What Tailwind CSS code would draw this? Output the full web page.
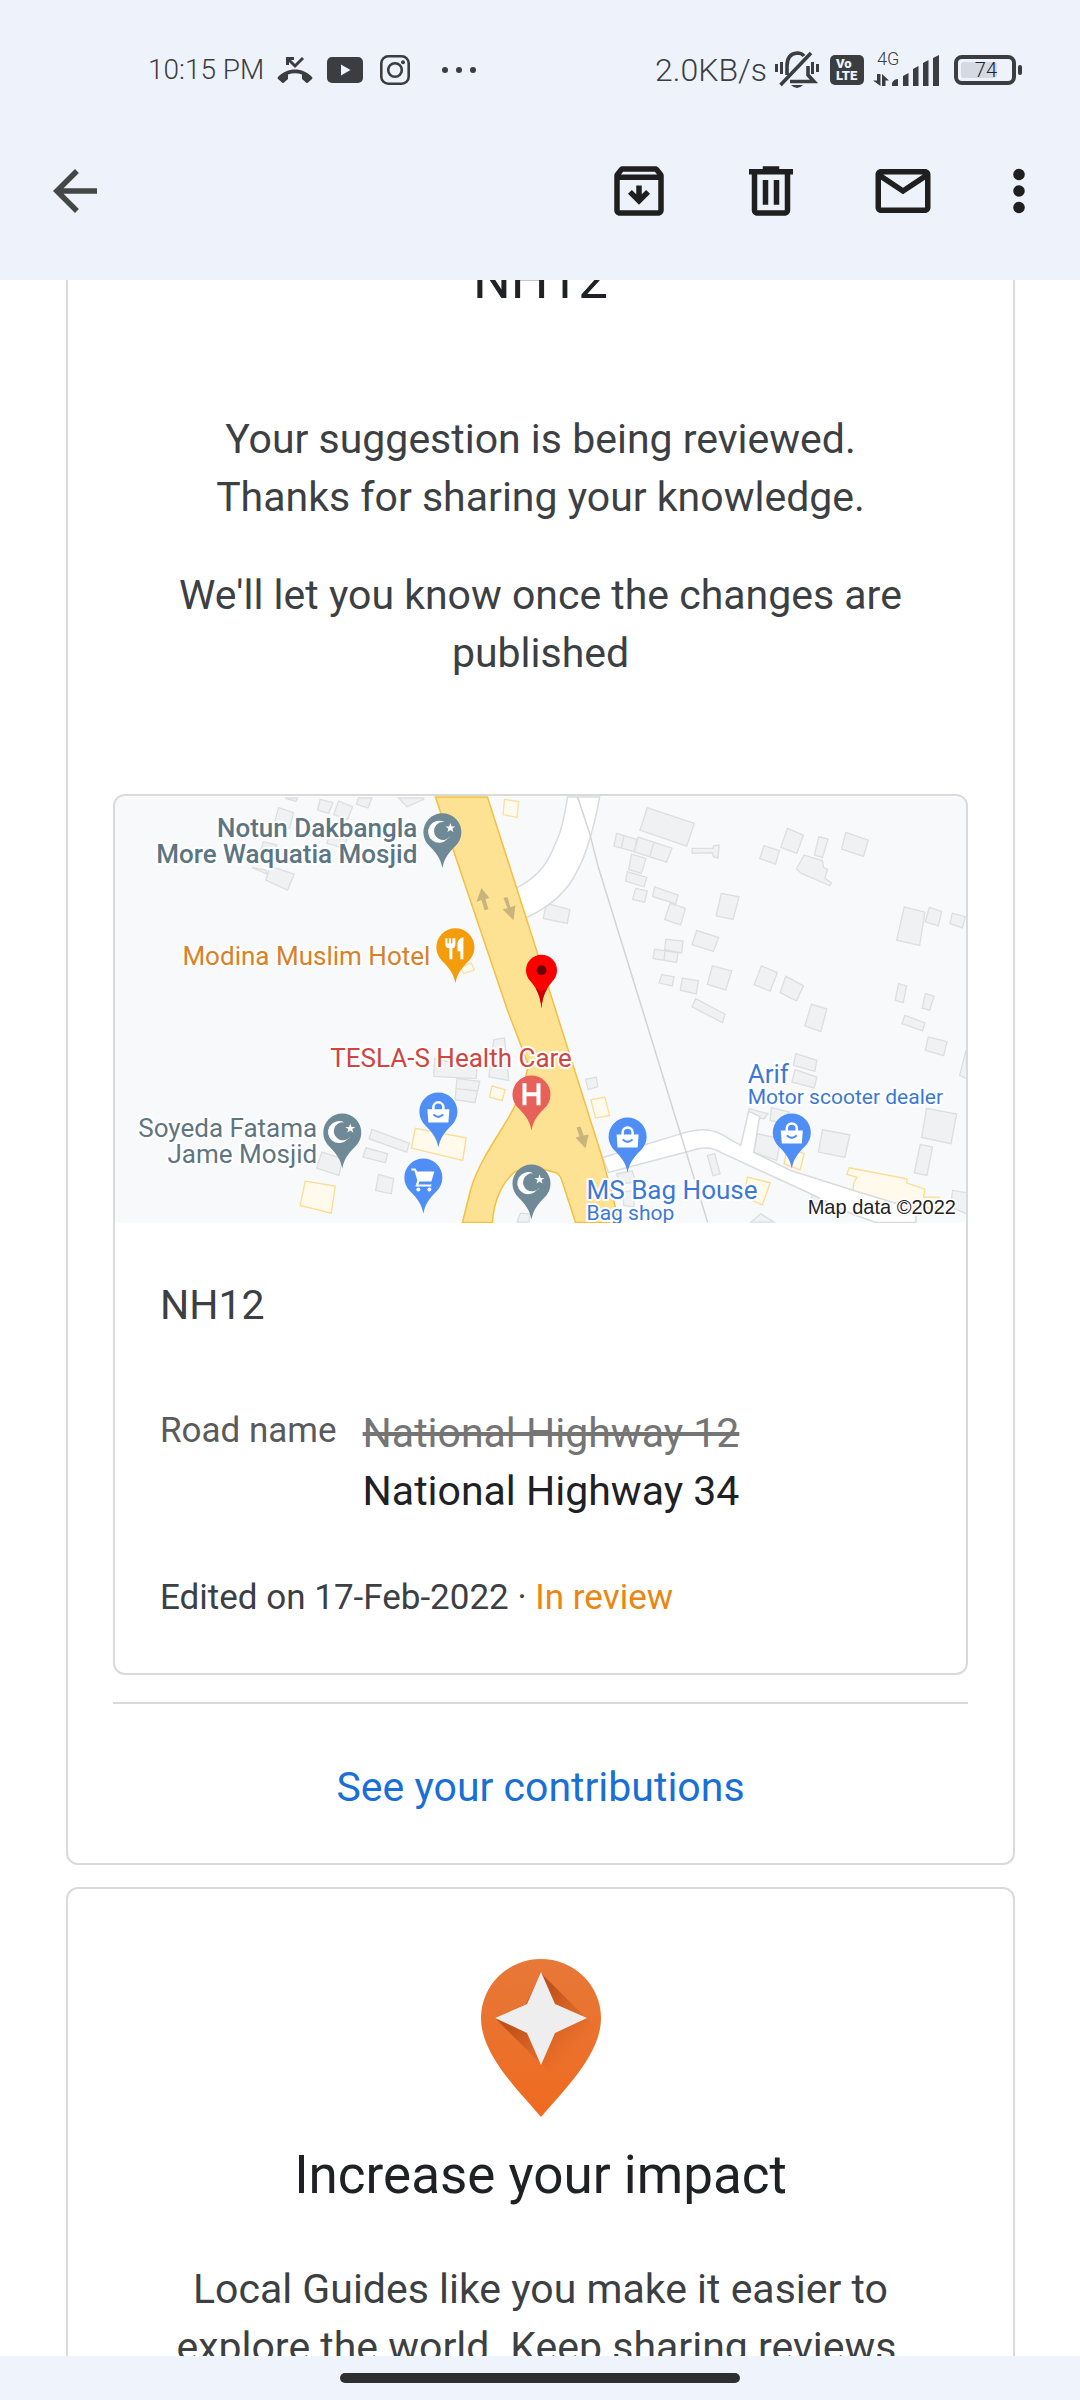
<!DOCTYPE html>
<html lang="en">
<head>
<meta charset="utf-8">
<meta name="viewport" content="width=device-width, initial-scale=1">
<title>NH12</title>
<script src="https://cdn.jsdelivr.net/npm/@tailwindcss/browser@4"></script>
</head>
<body class="flex h-screen flex-col overflow-hidden bg-white font-['Roboto',sans-serif] text-[41px] leading-[58px] text-[#3c4043]">

<header class="shrink-0 bg-[#eef3fb]">
  <!-- status bar -->
  <div class="flex h-[140px] items-center justify-between pr-[58px] pl-[148px] leading-8 text-[#3c3d41]">
    <div class="flex items-center">
      <span class="w-[129px] text-[28px] font-light whitespace-nowrap">10:15 PM</span>
      <svg class="h-[28px] w-[36px]" viewBox="0 0 36 28" fill="currentColor"><path d="M1 21C10 11 26 11 35 21Q36 22 35 23L31 26.500Q30 27.500 29 26.500L25 23V18.500Q18 16 11 18.500V23L7 26.500Q6 27.500 5 26.500L1 23Q0 22 1 21Z"/><path d="M10.500 9V2.500H17M11 3L18 10L26 2" fill="none" stroke="currentColor" stroke-width="3"/></svg>
      <svg class="ml-[14px] h-[26px] w-[36px]" viewBox="0 0 36 26"><rect width="36" height="26" rx="5" fill="currentColor"/><path d="M14 7.500L23.500 13L14 18.500Z" fill="#eef3fb"/></svg>
      <svg class="ml-[17px] h-[30px] w-[30px]" viewBox="0 0 30 30" fill="none" stroke="currentColor" stroke-width="2.600"><rect x="1.300" y="1.300" width="27.400" height="27.400" rx="7"/><circle cx="15" cy="15" r="6.800"/><circle cx="23" cy="7.300" r="2" fill="currentColor" stroke="none"/></svg>
      <svg class="ml-8 h-[6px] w-[34px]" viewBox="0 0 34 6" fill="currentColor"><circle cx="3" cy="3" r="3"/><circle cx="17" cy="3" r="3"/><circle cx="31" cy="3" r="3"/></svg>
    </div>
    <div class="flex items-center">
      <span class="text-[32px] font-light">2.0KB/s</span>
      <svg class="ml-2 h-[38px] w-[44px]" viewBox="0 0 44 38" fill="none" stroke="currentColor" stroke-width="3"><path d="M12 24V15Q12 3 22 2Q27 2 29 5M5.500 34L36 2" stroke-width="3.600"/><path d="M33 15V24L39 30.500H15" stroke-width="3.600"/><path d="M1.500 13V21M6.500 11V23M37.500 11V23M42.500 13V21"/><path d="M16 34H28Q22 40 16 34Z" fill="currentColor" stroke="none"/></svg>
      <div class="ml-[11px] flex h-[30px] w-[34px] flex-col justify-center rounded-[5px] bg-[#3c3d41] pl-[6px] text-[13px] leading-3 font-black text-[#eef3fb]"><span>Vo</span><span>LTE</span></div>
      <div class="ml-[9px] flex h-[36px] w-[67px] flex-col">
        <span class="h-[14px] pl-1 text-[18px] leading-[14px] font-light">4G</span>
        <svg class="-mt-3 h-[33px] w-[67px] shrink-0" viewBox="0 0 67 33" fill="currentColor"><path d="M4 20H7.500V32L0 26.500H4ZM9 32V20L16 26.500H12.500V32Z"/><path d="M19 32V29Q21 25 25 25V32ZM30 32V22L35.500 19V32ZM40 32V15L45.500 12V32ZM50 32V9L55.500 6V32ZM60 32V4L66 1V32Z"/></svg>
      </div>
      <div class="ml-[14px] flex h-[30px] w-[62px] items-center rounded-[8px] border-4 border-[#3c3d41] p-[3px]"><div class="flex h-4 w-9 items-center justify-end rounded-[3px] bg-[#d5d9e2] text-[20px] leading-4 font-light text-[#222]">74</div></div>
      <div class="ml-[2px] h-[10px] w-1 rounded-[2px] bg-[#3c3d41]"></div>
    </div>
  </div>
  <!-- toolbar -->
  <div class="flex h-[140px] items-start pt-[18px] pr-[28px] pl-[42px] text-[#1f1f1f]">
    <button type="button" aria-label="Back" class="text-[#444746]"><svg class="size-[66px]" viewBox="0 0 24 24" fill="currentColor"><path d="M20 11H7.830l5.590-5.590L12 4l-8 8 8 8 1.410-1.410L7.830 13H20v-2z"/></svg></button>
    <button type="button" aria-label="Archive" class="ml-auto"><svg class="size-[66px]" viewBox="0 0 24 24" fill="currentColor"><path d="M20.540 5.230l-1.390-1.680C18.880 3.210 18.470 3 18 3H6c-.47 0-.88.210-1.160.550L3.460 5.230C3.170 5.570 3 6.020 3 6.500V19c0 1.100.9 2 2 2h14c1.100 0 2-.9 2-2V6.500c0-.48-.17-.93-.46-1.270zM6.240 5h11.520l.83 1H5.420l.82-1zM5 19V8h14v11H5z"/><path d="M11 10h2v3.200l1.600-1.600L16 13l-4 4-4-4 1.400-1.400 1.600 1.600z"/></svg></button>
    <button type="button" aria-label="Delete" class="ml-[66px]"><svg class="size-[66px]" viewBox="0 0 24 24" fill="currentColor"><path d="M15 4V3H9v1H4v2h1v13c0 1.100.9 2 2 2h10c1.100 0 2-.9 2-2V6h1V4h-5zm2 15H7V6h10v13zM9 8h2v9H9zm4 0h2v9h-2z"/></svg></button>
    <button type="button" aria-label="Mark as unread" class="ml-[66px]"><svg class="size-[66px]" viewBox="0 0 24 24" fill="currentColor"><path d="M20 4H4c-1.100 0-2 .9-2 2v12c0 1.100.9 2 2 2h16c1.100 0 2-.9 2-2V6c0-1.100-.9-2-2-2zm-.8 2L12 10.800 4.800 6h14.400zM4 18V7.870l8 5.330 8-5.330V18H4z"/></svg></button>
    <button type="button" aria-label="More options" class="ml-[50px]"><svg class="size-[66px]" viewBox="0 0 24 24" fill="currentColor"><circle cx="12" cy="6" r="2.100"/><circle cx="12" cy="12" r="2.100"/><circle cx="12" cy="18" r="2.100"/></svg></button>
  </div>
</header>

<main class="min-h-0 flex-1 overflow-hidden pr-[65px] pl-[66px]">
  <section class="rounded-b-[12px] border-2 border-t-0 border-[#dadada] px-[45px] pb-[47px]">
    <h1 class="-mt-[30px] text-center text-[53px] leading-[60px] text-[#202124]">NH12</h1>
    <div class="mt-[100px] flex flex-col gap-10 px-12 text-center">
      <p>Your suggestion is being reviewed.<br>Thanks for sharing your knowledge.</p>
      <p>We'll let you know once the changes are published</p>
    </div>

    <article class="mt-28 overflow-hidden rounded-[12px] border-2 border-[#dadada]">
      <svg class="block w-full" viewBox="0 -1 850 426" role="img" aria-label="Map of NH12">
        <defs>
          <path id="pin" d="M0 36C-2 26-6 21-13 14A19 19 0 1 1 13 14C6 21 2 26 0 36Z"/>
          <g id="mosque"><use href="#pin" fill="#6f8a96"/><path d="M5 7A11 11 0 1 1 2-10A9 9 0 1 0 8 4Q7 6 5 7Z" fill="#fff"/><path d="M8-9L9.200-5.500H13L10-3.500L11 0L8-2L5 0L6-3.500L3-5.500H6.800Z" fill="#fff"/></g>
          <g id="shop"><use href="#pin" fill="#4f8ff5"/><path d="M-11-2H11L10 11H-10Z" fill="#fff"/><path d="M-5-1V-4A5 5 0 0 1 5-4V-1" fill="none" stroke="#fff" stroke-width="2.500"/><path d="M-5 3Q0 8 5 3" fill="none" stroke="#4f8ff5" stroke-width="2"/></g>
        </defs>
        <rect width="850" height="425" fill="#f8f9fb"/>
        <!-- buildings -->
        <g fill="#f0f1f3" stroke="#dddee0" stroke-width="4">
          <g transform="translate(-15 -17) scale(.33333)">
            <path d="M535 83L580 98L568 145L523 128ZM660 58L698 68L685 100L652 90ZM715 63L757 80L742 118L700 104ZM775 54H815L803 84L768 72ZM895 54L920 80L970 58V54ZM555 54H592L587 64ZM490 185L530 195L520 230L480 215ZM510 258L582 282L562 330L497 300ZM455 262L500 282L497 270ZM690 160L740 170L735 205L680 190Z"/>
            <path d="M1212 58L1254 65L1250 112L1208 104ZM1080 562L1112 548L1122 570L1090 580Z" fill="#fffaf0" stroke="#fbe0a0"/>
            <path d="M1338 370L1408 388L1400 430L1328 415Z"/>
          </g>
          <g transform="translate(415 -17) scale(.33333)">
            <path d="M350 83L491 130L468 198L328 150ZM258 160L318 178L312 215L250 198ZM280 168L272 205M323 171L424 204L408 246L310 215ZM370 188L357 230M303 222L346 235L332 280L294 268ZM290 275L349 292L340 320L285 303ZM315 325L350 333L342 366L306 358ZM484 205L548 205V197L565 195L562 234L548 230L545 218L485 220ZM770 145L818 165L798 220L750 202ZM700 197L746 212L734 252L687 235ZM864 170L892 177L875 232L851 225ZM945 157L1012 180L998 229L932 207ZM820 225L875 242L878 262L890 268L882 295L902 308L897 317L812 280L797 266ZM372 320L443 345L435 371L366 349ZM418 370L464 384L450 434L402 418ZM572 340L625 350L607 418L556 407ZM498 451L564 472L548 514L484 493ZM406 477L457 483L453 518L402 508ZM372 507L442 518L438 547L367 535ZM403 513L400 540M394 583L430 590L425 617L385 608ZM455 594L503 602L497 641L449 630ZM545 557L603 572L585 630L530 612ZM692 557L740 577L718 633L670 613ZM765 588L818 617L797 662L748 637ZM1120 380L1182 396L1166 496L1097 480ZM1195 382L1232 394L1222 437L1183 425ZM1264 399L1303 410L1294 443L1257 430ZM1103 610L1127 617L1117 667L1093 660ZM1183 640L1210 648L1196 690L1174 684Z"/>
          </g>
          <g transform="translate(-15 203) scale(.33333)">
            <path d="M1180 118L1212 113L1225 240L1165 230ZM1003 175L1130 205L1127 235L1000 228ZM1070 235L1138 243L1132 270L1124 307L1064 298ZM1070 265L1132 272M815 387L927 428L919 455L806 415ZM797 442L862 460L855 487L788 470ZM665 455L727 475L716 525L649 503ZM835 522L880 535L873 580L826 570ZM1260 638L1290 640L1285 665H1250Z"/>
            <path d="M945 384L1097 412L1087 480L933 443ZM1175 257L1214 268L1205 301L1167 290ZM615 542L705 557L693 638L600 615Z" fill="#fffaec" stroke="#fbdc94"/>
          </g>
          <g transform="translate(415 203) scale(.33333)">
            <path d="M495 -5L583 42L575 67L484 20ZM842 12L888 26L870 94L822 77ZM1122 45L1182 68L1175 92L1113 70ZM1192 110L1248 124L1238 166L1183 150ZM1305 150L1308 235L1286 225ZM795 160L858 180L852 213L788 195ZM793 208L858 230L850 263L783 245ZM165 237L197 230L202 259L173 268ZM875 388L957 403L942 471L863 455ZM1187 324L1277 341L1260 430L1172 411ZM1168 432L1205 440L1188 525L1150 517ZM655 325L712 340L700 355L650 350ZM722 322L775 335L760 370L718 360ZM680 400L750 415L738 480L668 455ZM530 465L552 460L568 520L547 526ZM258 520L305 512L315 545L270 550ZM275 575L310 570V620L280 615ZM845 575L895 590L890 620L840 605ZM1265 570L1308 577V640L1258 620ZM690 640L730 665H660Z"/>
            <path d="M181 298L223 291L237 345L195 353ZM650 530L718 547L695 613L640 590ZM770 440L820 460L808 508L760 490ZM955 502L1128 535V548L1182 566L1178 590H1225L1215 625L965 590L968 550L978 530L948 522Z" fill="#fffaec" stroke="#fbdc94"/>
          </g>
        </g>
        <!-- side roads -->
        <path d="M452 0C449 20 446 35 440 46C434 62 426 78 401 91L410 121C425 114 450 100 462 73C470 60 480 25 484 0Z" fill="#fff" stroke="#d9dbde" stroke-width="1.500"/>
        <path d="M487 360L570 335Q590 329 606 337L625 348L633 314L644 319L638 355L675 373L738 393L800 412V425H760L735 416L692 395L605 355Q595 348 580 352L493 375Z" fill="#fff" stroke="#d9dbde" stroke-width="1.500"/>
        <path d="M462 0L474 36L483 71L527 213L592 425" fill="none" stroke="#d2d4d7" stroke-width="1.500"/>
        <!-- highway -->
        <path d="M320 0L392 213L413 268Q408 290 400 307C390 330 364 360 355 393L347 425H377C378 405 386 385 400 374Q420 368 440 375Q445 377 447 385L460 425H504L486 358L437 203L372 0Z" fill="#fde293" stroke="#f5bf42" stroke-width="1.500"/>
        <g fill="#c9b47d"><path d="M366 91L374 101L370 102L373 112L369 113L366 103L361 105ZM398 123L387 112L392 111L388 101L392 100L395 110L400 108ZM470 351L460 340L464 339L461 330L465 329L468 338L473 337Z"/></g>
        <!-- place names -->
        <g font-family="Roboto, sans-serif" font-size="26" stroke="#fff" stroke-width="4" stroke-linejoin="round" paint-order="stroke">
          <g fill="#5b7583" font-weight="500" text-anchor="end"><text x="302" y="40">Notun Dakbangla</text><text x="302" y="66">More Waquatia Mosjid</text></g>
          <text x="315" y="168" text-anchor="end" fill="#d98029">Modina Muslim Hotel</text>
          <text x="215" y="270" fill="#d0453e">TESLA-S Health Care</text>
          <g fill="#5f7580" text-anchor="end"><text x="202" y="340">Soyeda Fatama</text><text x="202" y="366">Jame Mosjid</text></g>
          <g fill="#3b78d8"><text x="632" y="286">Arif</text><text x="632" y="307" font-size="21">Motor scooter dealer</text></g>
        </g>
        <use href="#mosque" x="327" y="35"/><use href="#mosque" x="227" y="335"/><use href="#mosque" x="416" y="386"/>
        <use href="#shop" x="323" y="314"/><use href="#shop" x="512" y="339"/><use href="#shop" x="676" y="335"/>
        <g transform="translate(340 150)"><use href="#pin" fill="#f39c0c"/><path d="M-10-9H-8V-4H-6.500V-9H-4.500V-4H-3V-9H0V-3Q0 1-3 1V12H-6V1Q-10 1-10-3ZM8-10V12H5V4H2V-4Q3-9 8-10Z" fill="#fff"/></g>
        <g transform="translate(416 297)"><use href="#pin" fill="#e8605a"/><path d="M-7-11V11M7-11V11M-7 0H7" stroke="#fff" stroke-width="4"/></g>
        <g transform="translate(308 380)"><use href="#pin" fill="#4f8ff5"/><path d="M-12-9H-8L-6-6H11L8 4H-4L-5 7H8V9H-8L-6 3L-9-7H-12Z" fill="#fff"/><circle cx="-5" cy="12" r="2" fill="#fff"/><circle cx="6" cy="12" r="2" fill="#fff"/></g>
        <path d="M426 211C425 196 420 190 415 184A15.500 15.500 0 1 1 437 184C432 190 427 196 426 211Z" fill="#f00"/><path d="M426 211C425 202 423 196 420 191L426 194L432 191C428 198 427 202 426 211Z" fill="#c00"/><circle cx="426" cy="173" r="5" fill="#600"/>
        <g font-family="Roboto, sans-serif" font-size="26" fill="#3b78d8" stroke="#fff" stroke-width="4" stroke-linejoin="round" paint-order="stroke"><text x="471" y="402">MS Bag House</text><text x="471" y="423" font-size="21">Bag shop</text></g>
        <text x="840" y="417" text-anchor="end" font-family="'Liberation Sans', sans-serif" font-size="20" fill="#222" stroke="#fff" stroke-width="3" paint-order="stroke">Map data ©2022</text>
      </svg>
      <div class="px-[45px] pt-[53px] pb-12">
        <h2>NH12</h2>
        <dl class="mt-[70px] flex gap-[26px]">
          <dt class="text-[35px] leading-[54px] text-[#5a5a5c]">Road name</dt>
          <dd><del class="block text-[#757575] decoration-4">National Highway 12</del><ins class="block text-[#202124] no-underline">National Highway 34</ins></dd>
        </dl>
        <p class="mt-[51px] text-[35px] leading-[54px]">Edited on 17-Feb-2022 · <span class="text-[#ea8612]">In review</span></p>
      </div>
    </article>

    <div class="mt-[27px] border-t-2 border-[#dadada] pt-[54px] text-center">
      <a href="#" class="block text-[#1a6fd6]">See your contributions</a>
    </div>
  </section>

  <section class="mt-[22px] rounded-[12px] border-2 border-[#dadada] px-[45px] pt-[70px] pb-12 text-center">
    <svg class="mx-auto h-[158px] w-[120px]" viewBox="0 0 120 158" aria-hidden="true">
      <defs>
        <linearGradient id="body" x1="0" y1="0" x2="0" y2="1"><stop stop-color="#e77838"/><stop offset="1" stop-color="#ef6a20"/></linearGradient>
        <linearGradient id="shade" gradientUnits="userSpaceOnUse" x1="50" y1="50" x2="92" y2="92"><stop stop-color="#c0531b"/><stop offset="1" stop-color="#cf5b1d" stop-opacity="0"/></linearGradient>
        <clipPath id="drop"><path d="M60 158C38 132 0 96 0 59A60 59 0 0 1 120 59C120 96 82 132 60 158Z"/></clipPath>
      </defs>
      <g clip-path="url(#drop)"><rect width="120" height="158" fill="url(#body)"/><path d="M60 14L130 84V175L14 59L45 45Z" fill="url(#shade)"/></g>
      <path d="M60 13L74 45L106 59L74 74L60 106L46 74L14 59L46 45Z" fill="#eee"/>
    </svg>
    <h2 class="mt-7 text-[53px] leading-[60px] text-[#202124]">Increase your impact</h2>
    <p class="mt-[55px] px-12">Local Guides like you make it easier to explore the world. Keep sharing reviews,</p>
  </section>
</main>

<footer class="flex h-11 shrink-0 items-center justify-center bg-[#eff3fc]"><div class="h-[10px] w-[400px] rounded-full bg-[#2d2f31]"></div></footer>
</body>
</html>
